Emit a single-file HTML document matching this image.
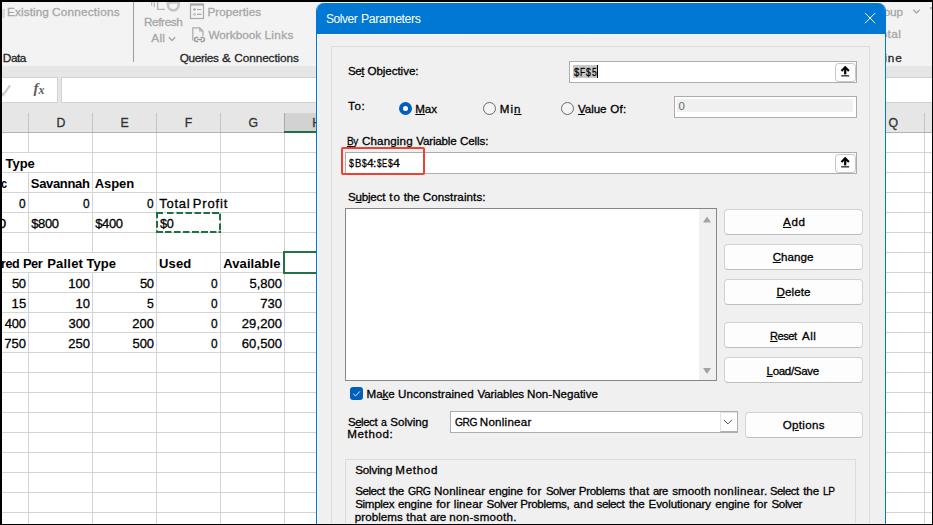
<!DOCTYPE html>
<html lang="en">
<head>
<meta charset="utf-8">
<title>Solver Parameters</title>
<style>
*{box-sizing:border-box;margin:0;padding:0}
html,body{width:933px;height:525px;overflow:hidden;background:#fff}
body{position:relative;font-family:"Liberation Sans",sans-serif;font-size:12px;color:#000}
.a{position:absolute}
.t{position:absolute;white-space:pre;line-height:1;-webkit-text-stroke:0.3px;transform-origin:0 0}
.w{display:inline-block;transform-origin:0 0;vertical-align:baseline}
u{text-decoration:underline;text-underline-offset:0.5px;text-decoration-thickness:1px}
.btn{position:absolute;background:#fdfdfd;border:1px solid #d2d2d2;border-bottom-color:#bebebe;border-radius:4px}
.inp{position:absolute;background:#fff;border:1px solid #abadb3}
.up{position:absolute;background:#fdfdfd;border:1px solid #c6c6c6;border-radius:3.5px}
.gl{position:absolute;background:#d4d4d4}
</style>
</head>
<body>
<div class="a" style="left:0;top:0;width:933px;height:66px;background:#f3f3f3"></div>
<div class="a" style="left:0;top:66px;width:933px;height:66px;background:#e6e6e6"></div>
<div class="a" style="left:0;top:77px;width:58px;height:26px;background:#fff;border:1px solid #d2d2d2"></div>
<div class="a" style="left:61px;top:77px;width:880px;height:26px;background:#fff;border:1px solid #d2d2d2"></div>
<div class="a" style="left:0;top:132px;width:933px;height:393px;background:#fff"></div>
<div class="a" style="left:285px;top:113px;width:40px;height:18px;background:#d2d2d2"></div>
<div class="a" style="left:28px;top:113px;width:1px;height:19px;background:#c4c4c4"></div>
<div class="a" style="left:92px;top:113px;width:1px;height:19px;background:#c4c4c4"></div>
<div class="a" style="left:156px;top:113px;width:1px;height:19px;background:#c4c4c4"></div>
<div class="a" style="left:220px;top:113px;width:1px;height:19px;background:#c4c4c4"></div>
<div class="a" style="left:284px;top:113px;width:1px;height:19px;background:#c4c4c4"></div>
<div class="a" style="left:348px;top:113px;width:1px;height:19px;background:#c4c4c4"></div>
<div class="a" style="left:412px;top:113px;width:1px;height:19px;background:#c4c4c4"></div>
<div class="a" style="left:476px;top:113px;width:1px;height:19px;background:#c4c4c4"></div>
<div class="a" style="left:540px;top:113px;width:1px;height:19px;background:#c4c4c4"></div>
<div class="a" style="left:604px;top:113px;width:1px;height:19px;background:#c4c4c4"></div>
<div class="a" style="left:668px;top:113px;width:1px;height:19px;background:#c4c4c4"></div>
<div class="a" style="left:732px;top:113px;width:1px;height:19px;background:#c4c4c4"></div>
<div class="a" style="left:796px;top:113px;width:1px;height:19px;background:#c4c4c4"></div>
<div class="a" style="left:860px;top:113px;width:1px;height:19px;background:#c4c4c4"></div>
<div class="a" style="left:924px;top:113px;width:1px;height:19px;background:#c4c4c4"></div>
<div class="gl" style="left:0;top:132px;width:933px;height:1px"></div>
<div class="gl" style="left:0;top:152px;width:933px;height:1px"></div>
<div class="gl" style="left:0;top:172px;width:933px;height:1px"></div>
<div class="gl" style="left:0;top:192px;width:933px;height:1px"></div>
<div class="gl" style="left:0;top:212px;width:933px;height:1px"></div>
<div class="gl" style="left:0;top:232px;width:933px;height:1px"></div>
<div class="gl" style="left:0;top:252px;width:933px;height:1px"></div>
<div class="gl" style="left:0;top:272px;width:933px;height:1px"></div>
<div class="gl" style="left:0;top:292px;width:933px;height:1px"></div>
<div class="gl" style="left:0;top:312px;width:933px;height:1px"></div>
<div class="gl" style="left:0;top:332px;width:933px;height:1px"></div>
<div class="gl" style="left:0;top:352px;width:933px;height:1px"></div>
<div class="gl" style="left:0;top:372px;width:933px;height:1px"></div>
<div class="gl" style="left:0;top:392px;width:933px;height:1px"></div>
<div class="gl" style="left:0;top:412px;width:933px;height:1px"></div>
<div class="gl" style="left:0;top:432px;width:933px;height:1px"></div>
<div class="gl" style="left:0;top:452px;width:933px;height:1px"></div>
<div class="gl" style="left:0;top:472px;width:933px;height:1px"></div>
<div class="gl" style="left:0;top:492px;width:933px;height:1px"></div>
<div class="gl" style="left:0;top:512px;width:933px;height:1px"></div>
<div class="gl" style="left:28px;top:132px;width:1px;height:393px"></div>
<div class="gl" style="left:92px;top:132px;width:1px;height:393px"></div>
<div class="gl" style="left:156px;top:132px;width:1px;height:393px"></div>
<div class="gl" style="left:220px;top:132px;width:1px;height:393px"></div>
<div class="gl" style="left:284px;top:132px;width:1px;height:393px"></div>
<div class="gl" style="left:348px;top:132px;width:1px;height:393px"></div>
<div class="gl" style="left:412px;top:132px;width:1px;height:393px"></div>
<div class="gl" style="left:476px;top:132px;width:1px;height:393px"></div>
<div class="gl" style="left:540px;top:132px;width:1px;height:393px"></div>
<div class="gl" style="left:604px;top:132px;width:1px;height:393px"></div>
<div class="gl" style="left:668px;top:132px;width:1px;height:393px"></div>
<div class="gl" style="left:732px;top:132px;width:1px;height:393px"></div>
<div class="gl" style="left:796px;top:132px;width:1px;height:393px"></div>
<div class="gl" style="left:860px;top:132px;width:1px;height:393px"></div>
<div class="gl" style="left:924px;top:132px;width:1px;height:393px"></div>
<div class="a" style="left:0;top:132px;width:933px;height:1px;background:#b2b2b2"></div>
<div class="a" style="left:284px;top:113px;width:1px;height:19px;background:#a8a8a8"></div>
<div class="a" style="left:284px;top:131px;width:40px;height:2px;background:#1e7145"></div>
<div class="a" style="left:2px;top:153px;width:60px;height:19px;background:#fff"></div>
<div class="a" style="left:2px;top:253px;width:120px;height:19px;background:#fff"></div>
<div class="a" style="left:157px;top:193px;width:75px;height:19px;background:#fff"></div>
<div class="a" style="left:133px;top:2px;width:1px;height:60px;background:#9c9c9c"></div>
<span class="t" style="left:7.08px;top:6.71px;font-size:11.8px;color:#a6a6a6"><span class="w" style="letter-spacing:0.074px;width:44.87px">Existing </span><span class="w" style="letter-spacing:0.207px">Connections</span></span>
<span class="t" style="left:2.83px;top:53.01px;letter-spacing:-0.443px;font-size:11.8px;color:#262626">Data</span>
<span class="t" style="left:143.98px;top:16.91px;letter-spacing:-0.405px;font-size:11.8px;color:#a6a6a6">Refresh</span>
<span class="t" style="left:151.20px;top:33.41px;letter-spacing:0.332px;font-size:11.8px;color:#a6a6a6">All</span>
<span class="t" style="left:207.48px;top:6.91px;letter-spacing:-0.015px;font-size:11.8px;color:#a6a6a6">Properties</span>
<span class="t" style="left:208.40px;top:29.71px;font-size:11.8px;color:#a6a6a6"><span class="w" style="letter-spacing:-0.013px;width:56.08px">Workbook </span><span class="w" style="letter-spacing:0.336px">Links</span></span>
<span class="t" style="left:179.75px;top:52.81px;font-size:11.8px;color:#262626"><span class="w" style="letter-spacing:-0.349px;width:42.55px">Queries </span><span class="w" style="transform:scaleX(1.0983);width:12.05px">&amp; </span><span class="w" style="letter-spacing:-0.098px">Connections</span></span>
<span class="t" style="left:883.63px;top:6.71px;letter-spacing:-0.170px;font-size:11.8px;color:#a6a6a6">oup</span>
<span class="t" style="left:880.63px;top:29.21px;letter-spacing:0.374px;font-size:11.8px;color:#a6a6a6">otal</span>
<span class="t" style="left:884.26px;top:52.61px;letter-spacing:0.859px;font-size:11.8px;color:#262626">ine</span>
<svg class="a" style="left:0;top:0" width="933" height="70" viewBox="0 0 933 70" fill="none" stroke="#a9a9a9" stroke-width="1">
<path d="M168.800 37.300 l3.200 3.200 l3.200 -3.200" stroke="#a4a4a4" stroke-width="1.300"/>
<path d="M913.300 9.800 l3.200 3.200 l3.200 -3.200" stroke="#a4a4a4" stroke-width="1.300"/>
<path d="M931 7 v2.200" stroke="#ababab" stroke-width="1.600"/>
<rect x="190.500" y="4.500" width="13" height="14" stroke="#a9a9a9" stroke-width="1.200"/>
<rect x="190" y="3.400" width="14" height="2.200" fill="#a9a9a9" stroke="none"/>
<circle cx="194.500" cy="9.500" r="1.300" fill="#a9a9a9" stroke="none"/><circle cx="194.500" cy="14.400" r="1" stroke="#a9a9a9" stroke-width="0.900"/>
<path d="M197 9.500 h4.500 M197 14.400 h4.500" stroke="#a9a9a9" stroke-width="1.200"/>
<path d="M192.800 40.600 V27.800 H199.800 L203 31 V36 M199.800 27.800 V31 H203" stroke="#ababab" stroke-width="1.200"/>
<path d="M198.200 37.500 h-1.700 a2 2 0 0 0 0 4 h1.700 M200.600 37.500 h1.900 a2 2 0 0 1 0 4 h-1.900 M197.300 39.500 h4.600" stroke="#9c9c9c" stroke-width="1.400"/>
<path d="M151.600 2 v3.500 M154.300 2 v5" stroke="#bcbcbc" stroke-width="1.200"/>
<path d="M157.600 2 v7.400 h7.400" stroke="#b8b8b8" stroke-width="1.300"/>
<path d="M168 2 V5 a5.300 5.300 0 0 0 10.600 0 V2" stroke="#c2c2c2" stroke-width="2.600"/>
<rect x="166.600" y="2" width="13.400" height="1.600" fill="#c2c2c2" stroke="none"/>
<rect x="2" y="9" width="3" height="9" fill="#dcd8dc" stroke="none"/>
</svg>
<svg class="a" style="left:0;top:78px" width="60" height="25" viewBox="0 0 60 25" fill="none"><path d="M0.500 13.500 L3.200 17 L10 7.300" stroke="#cbcbcb" stroke-width="2.100"/></svg>
<span class="t" style="left:33.5px;top:80.8px;font-family:'Liberation Serif',serif;font-style:italic;font-weight:bold;font-size:15px;color:#5e5e5e;-webkit-text-stroke:0">f<span style="font-size:12px;position:relative;top:1px">x</span></span>
<span class="t" style="left:56.40px;top:116.59px;font-size:12.3px;color:#333;width:8px;text-align:center">D</span>
<span class="t" style="left:120.40px;top:116.59px;font-size:12.3px;color:#333;width:8px;text-align:center">E</span>
<span class="t" style="left:184.40px;top:116.59px;font-size:12.3px;color:#333;width:8px;text-align:center">F</span>
<span class="t" style="left:248.40px;top:116.59px;font-size:12.3px;color:#333;width:8px;text-align:center">G</span>
<span class="t" style="left:312.30px;top:116.59px;font-size:12.3px;color:#333">H</span>
<span class="t" style="left:888.50px;top:116.59px;font-size:12.3px;color:#333">Q</span>
<span class="t" style="left:5.50px;top:157.00px;letter-spacing:-0.018px;font-size:13px;font-weight:bold;-webkit-text-stroke:0">Type</span>
<span class="t" style="left:0.66px;top:177.00px;transform:scaleX(0.8462);font-size:13px;font-weight:bold;-webkit-text-stroke:0">c</span>
<span class="t" style="left:30.80px;top:177.00px;letter-spacing:-0.333px;font-size:13px;font-weight:bold;-webkit-text-stroke:0">Savannah</span>
<span class="t" style="left:94.80px;top:177.00px;letter-spacing:-0.100px;font-size:13px;font-weight:bold;-webkit-text-stroke:0">Aspen</span>
<span class="t" style="left:19.20px;top:197.00px;transform:scaleX(0.9123);font-size:13px">0</span>
<span class="t" style="left:83.20px;top:197.00px;transform:scaleX(0.9123);font-size:13px">0</span>
<span class="t" style="left:147.20px;top:197.00px;transform:scaleX(0.9123);font-size:13px">0</span>
<span class="t" style="left:159.30px;top:197.00px;font-size:13px"><span class="w" style="letter-spacing:0.713px;width:33.44px">Total </span><span class="w" style="letter-spacing:0.876px">Profit</span></span>
<span class="t" style="left:-1.96px;top:217.00px;transform:scaleX(1.1385);font-size:13px">0</span>
<span class="t" style="left:31.25px;top:217.00px;letter-spacing:-0.365px;font-size:13px">$800</span>
<span class="t" style="left:95.25px;top:217.00px;letter-spacing:-0.365px;font-size:13px">$400</span>
<span class="t" style="left:159.80px;top:217.00px;letter-spacing:-0.450px;transform:scaleX(0.9791);font-size:13px">$0</span>
<span class="t" style="left:1.02px;top:257.00px;font-size:13px;font-weight:bold;-webkit-text-stroke:0"><span class="w" style="letter-spacing:-0.450px;transform:scaleX(0.9612);width:21.88px">red </span><span class="w" style="letter-spacing:-0.450px;transform:scaleX(0.9862);width:24.29px">Per </span><span class="w" style="letter-spacing:0.218px;width:39.41px">Pallet </span><span class="w" style="letter-spacing:-0.018px">Type</span></span>
<span class="t" style="left:158.89px;top:257.00px;letter-spacing:0.217px;font-size:13px;font-weight:bold;-webkit-text-stroke:0">Used</span>
<span class="t" style="left:223.30px;top:257.00px;letter-spacing:0.078px;font-size:13px;font-weight:bold;-webkit-text-stroke:0">Available</span>
<span class="t" style="left:11.98px;top:277.00px;letter-spacing:-0.370px;font-size:13px">50</span>
<span class="t" style="left:68.15px;top:277.00px;letter-spacing:0.118px;font-size:13px">100</span>
<span class="t" style="left:139.98px;top:277.00px;letter-spacing:-0.370px;font-size:13px">50</span>
<span class="t" style="left:211.45px;top:277.00px;transform:scaleX(0.9123);font-size:13px">0</span>
<span class="t" style="left:249.42px;top:277.00px;letter-spacing:0.030px;font-size:13px">5,800</span>
<span class="t" style="left:11.58px;top:297.00px;letter-spacing:0.239px;font-size:13px">15</span>
<span class="t" style="left:75.58px;top:297.00px;letter-spacing:0.036px;font-size:13px">10</span>
<span class="t" style="left:147.44px;top:297.00px;transform:scaleX(0.9417);font-size:13px">5</span>
<span class="t" style="left:211.45px;top:297.00px;transform:scaleX(0.9123);font-size:13px">0</span>
<span class="t" style="left:260.35px;top:297.00px;letter-spacing:0.017px;font-size:13px">730</span>
<span class="t" style="left:4.76px;top:317.00px;letter-spacing:-0.187px;font-size:13px">400</span>
<span class="t" style="left:68.55px;top:317.00px;letter-spacing:-0.085px;font-size:13px">300</span>
<span class="t" style="left:132.35px;top:317.00px;letter-spacing:0.017px;font-size:13px">200</span>
<span class="t" style="left:211.45px;top:317.00px;transform:scaleX(0.9123);font-size:13px">0</span>
<span class="t" style="left:241.79px;top:317.00px;letter-spacing:0.104px;font-size:13px">29,200</span>
<span class="t" style="left:4.35px;top:337.00px;letter-spacing:0.017px;font-size:13px">750</span>
<span class="t" style="left:68.35px;top:337.00px;letter-spacing:0.017px;font-size:13px">250</span>
<span class="t" style="left:132.55px;top:337.00px;letter-spacing:-0.085px;font-size:13px">500</span>
<span class="t" style="left:211.45px;top:337.00px;transform:scaleX(0.9123);font-size:13px">0</span>
<span class="t" style="left:241.79px;top:337.00px;letter-spacing:0.104px;font-size:13px">60,500</span>
<svg class="a" style="left:0;top:0" width="240" height="240" viewBox="0 0 240 240" fill="#1e7145"><rect x="156" y="212" width="7" height="2"/><rect x="167" y="212" width="6.5" height="2"/><rect x="176.5" y="212" width="6.5" height="2"/><rect x="185.5" y="212" width="6.5" height="2"/><rect x="194.5" y="212" width="6.5" height="2"/><rect x="203.5" y="212" width="6.5" height="2"/><rect x="212" y="212" width="7" height="2"/><rect x="156" y="231" width="7" height="2"/><rect x="165" y="231" width="6.5" height="2"/><rect x="174" y="231" width="6.5" height="2"/><rect x="183" y="231" width="6.5" height="2"/><rect x="192" y="231" width="7" height="2"/><rect x="201" y="231" width="7" height="2"/><rect x="210" y="231" width="6.5" height="2"/><rect x="218.5" y="231" width="2.5" height="2"/><rect x="156" y="212" width="2" height="6.3"/><rect x="156" y="220.9" width="2" height="6.8"/><rect x="156" y="230.3" width="2" height="2.7"/><rect x="219" y="213.6" width="2" height="6.8"/><rect x="219" y="223.4" width="2" height="6.5"/><rect x="219" y="230.7" width="2" height="2.3"/></svg>
<div class="a" style="left:283px;top:251px;width:60px;height:23px;border:2px solid #217346;background:#fff"></div>
<div class="a" style="left:316px;top:3px;width:570px;height:530px;background:#f0f0f0;border-left:1px solid #0078d4;border-right:1px solid #0078d4;border-radius:8px 8px 0 0;overflow:hidden"><div class="a" style="left:-1px;top:0;width:570px;height:31px;background:#0078d4"></div></div>
<div class="a" style="left:317px;top:34px;width:568px;height:1px;background:linear-gradient(to right,#faf8f5,#f6f4f2 50%,#f0f0f0)"></div><div class="a" style="left:317px;top:34px;width:1px;height:491px;background:#faf8f5"></div>
<span class="t" style="left:325.88px;top:12.59px;font-size:12.3px;color:#fff;-webkit-text-stroke:0"><span class="w" style="letter-spacing:-0.450px;transform:scaleX(0.9714);width:35.16px">Solver </span><span class="w" style="letter-spacing:-0.414px">Parameters</span></span>
<svg class="a" style="left:860px;top:8px" width="20" height="20" viewBox="0 0 20 20"><path d="M5 5 L15.200 15.200 M15.200 5 L5 15.200" stroke="#fff" stroke-width="1" fill="none"/></svg>
<div class="a" style="left:331px;top:46px;width:539px;height:500px;border:1px solid #dcdcdc"></div>
<span class="t" style="left:347.89px;top:65.18px;font-size:11.6px"><span class="w" style="letter-spacing:-0.450px;width:19.57px">Se<u>t</u> </span><span class="w" style="letter-spacing:-0.054px">Objective:</span></span>
<div class="inp" style="left:569px;top:61px;width:288px;height:22px"></div>
<div class="a" style="left:573px;top:65px;width:24px;height:13px;background:#c8c8c8"></div>
<span class="t" style="left:573.70px;top:67.27px;font-size:11.5px"><span class="w" style="transform:scaleX(0.8109);width:5.94px">$</span><span class="w" style="transform:scaleX(0.7304);width:6.06px">F</span><span class="w" style="transform:scaleX(0.7473);width:6.03px">$</span><span class="w" style="transform:scaleX(0.7540)">5</span></span>
<div class="a" style="left:597px;top:65px;width:1px;height:13px;background:#000"></div>
<div class="up" style="left:835px;top:62.5px;width:21px;height:19px"></div>
<svg class="a" style="left:835px;top:62.5px" width="21" height="20" viewBox="0 0 21 20" fill="none" stroke="#000"><path d="M6.500 8 L10.200 4.300 L13.900 8" stroke-width="2.200"/><path d="M10.200 5 V11.400" stroke-width="2.200"/><rect x="6.200" y="12.300" width="8" height="1.100" fill="#000" stroke="none"/></svg>
<span class="t" style="left:348.07px;top:100.18px;letter-spacing:0.627px;font-size:11.6px">To:</span>
<div class="a" style="left:399px;top:102px;width:13px;height:13px;border-radius:50%;background:#005fb8"></div><div class="a" style="left:403px;top:106px;width:5px;height:5px;border-radius:50%;background:#fff"></div>
<span class="t" style="left:415.34px;top:103.18px;letter-spacing:-0.129px;font-size:11.6px"><u>M</u>ax</span>
<div class="a" style="left:483px;top:102px;width:13px;height:13px;border-radius:50%;background:#f4f4f4;border:1px solid #6a6a6a"></div>
<span class="t" style="left:499.84px;top:103.18px;letter-spacing:1.000px;font-size:11.6px">Mi<u>n</u></span>
<div class="a" style="left:561px;top:102px;width:13px;height:13px;border-radius:50%;background:#f4f4f4;border:1px solid #6a6a6a"></div>
<span class="t" style="left:578.10px;top:103.43px;font-size:11.6px"><span class="w" style="letter-spacing:-0.109px;width:32.06px"><u>V</u>alue </span><span class="w" style="letter-spacing:0.312px">Of:</span></span>
<div class="inp" style="left:674px;top:96px;width:183px;height:22px"></div>
<div class="a" style="left:677px;top:99px;width:176px;height:13px;background:#f0f0f0"></div>
<span class="t" style="left:678.50px;top:101.27px;font-size:11.5px;color:#6d6d6d;-webkit-text-stroke:0">0</span>
<span class="t" style="left:347.47px;top:135.18px;font-size:11.6px"><span class="w" style="letter-spacing:-0.450px;transform:scaleX(0.8620);width:14.49px"><u>B</u>y </span><span class="w" style="letter-spacing:0.148px;width:54.29px">Changing </span><span class="w" style="letter-spacing:-0.176px;width:43.71px">Variable </span><span class="w" style="letter-spacing:-0.083px">Cells:</span></span>
<div class="inp" style="left:345px;top:152px;width:512px;height:22px"></div>
<span class="t" style="left:349.40px;top:157.87px;font-size:11.5px"><span class="w" style="transform:scaleX(0.7632);width:5.26px">$</span><span class="w" style="transform:scaleX(0.8268);width:6.94px">B</span><span class="w" style="transform:scaleX(0.7314);width:5.01px">$</span><span class="w" style="transform:scaleX(1.0456);width:6.76px">4</span><span class="w" style="transform:scaleX(1.0335);width:3.33px">:</span><span class="w" style="transform:scaleX(0.7155);width:5.20px">$</span><span class="w" style="transform:scaleX(0.6678);width:5.70px">E</span><span class="w" style="transform:scaleX(0.7473);width:5.11px">$</span><span class="w" style="transform:scaleX(1.0793)">4</span></span>
<div class="up" style="left:835px;top:153.5px;width:21px;height:19px"></div>
<svg class="a" style="left:835px;top:153.5px" width="21" height="20" viewBox="0 0 21 20" fill="none" stroke="#000"><path d="M6.500 8 L10.200 4.300 L13.900 8" stroke-width="2.200"/><path d="M10.200 5 V11.400" stroke-width="2.200"/><rect x="6.200" y="12.300" width="8" height="1.100" fill="#000" stroke="none"/></svg>
<div class="a" style="left:341px;top:147px;width:84px;height:28px;border:2px solid #ea4335;border-radius:2px"></div>
<span class="t" style="left:347.89px;top:191.18px;font-size:11.6px"><span class="w" style="letter-spacing:-0.186px;width:41.36px">S<u>u</u>bject </span><span class="w" style="letter-spacing:1.000px;width:14.50px">to </span><span class="w" style="letter-spacing:-0.078px;width:18.96px">the </span><span class="w" style="letter-spacing:0.086px">Constraints:</span></span>
<div class="a" style="left:345px;top:208px;width:372px;height:173px;background:#fff;border:1px solid #828790"></div>
<div class="a" style="left:699px;top:209px;width:17px;height:171px;background:#f0f0f0"></div>
<svg class="a" style="left:699px;top:209px" width="18" height="171" viewBox="0 0 18 171"><path d="M4 13.500 L8 7.500 L12 13.500 Z M4 159 L8 165 L12 159 Z" fill="#a3a3a3"/></svg>
<div class="btn" style="left:724px;top:209px;width:139px;height:26px"></div>
<span class="t" style="left:783.00px;top:216.43px;letter-spacing:0.631px;font-size:11.6px"><u>A</u>dd</span>
<div class="btn" style="left:724px;top:244px;width:139px;height:26px"></div>
<span class="t" style="left:772.71px;top:251.43px;letter-spacing:0.026px;font-size:11.6px"><u>C</u>hange</span>
<div class="btn" style="left:724px;top:279px;width:139px;height:26px"></div>
<span class="t" style="left:776.59px;top:286.43px;letter-spacing:0.069px;font-size:11.6px"><u>D</u>elete</span>
<div class="btn" style="left:724px;top:322px;width:139px;height:26px"></div>
<span class="t" style="left:770.39px;top:329.68px;font-size:11.6px"><span class="w" style="letter-spacing:-0.450px;transform:scaleX(0.9498);width:31.61px"><u>R</u>eset </span><span class="w" style="letter-spacing:0.437px">All</span></span>
<div class="btn" style="left:724px;top:357px;width:139px;height:26px"></div>
<span class="t" style="left:766.59px;top:364.68px;letter-spacing:-0.355px;font-size:11.6px"><u>L</u>oad/Save</span>
<div class="a" style="left:350px;top:387px;width:13px;height:13px;border-radius:3px;background:#005fb8"></div><svg class="a" style="left:350px;top:387px" width="13" height="13" viewBox="0 0 13 13"><path d="M3.400 7 L5.600 8.900 L9.900 4.400" stroke="#eaf2fb" stroke-width="1" fill="none"/></svg>
<span class="t" style="left:366.59px;top:388.18px;font-size:11.6px"><span class="w" style="letter-spacing:-0.080px;width:31.43px">Ma<u>k</u>e </span><span class="w" style="letter-spacing:0.069px;width:79.48px">Unconstrained </span><span class="w" style="letter-spacing:-0.111px;width:49.59px">Variables </span><span class="w">Non-Negative</span></span>
<span class="t" style="left:347.89px;top:415.68px;font-size:11.6px"><span class="w" style="letter-spacing:-0.450px;transform:scaleX(0.9859);width:33.38px">S<u>e</u>lect </span><span class="w" style="transform:scaleX(0.9087);width:9.12px">a </span><span class="w" style="letter-spacing:-0.047px">Solving</span></span>
<span class="t" style="left:347.34px;top:428.18px;letter-spacing:0.590px;font-size:11.6px">Method:</span>
<div class="inp" style="left:450px;top:411px;width:288px;height:22px"></div>
<div class="a" style="left:720px;top:412px;width:17px;height:20px;background:#fdfdfd;border:1px solid #e2e2e2;border-right:none;border-bottom-color:#b0b0b0"></div>
<svg class="a" style="left:720px;top:412px" width="18" height="20" viewBox="0 0 18 20"><path d="M3.900 7.900 L7.900 11.900 L11.900 7.900" stroke="#505050" stroke-width="1" fill="none"/></svg>
<span class="t" style="left:454.52px;top:416.43px;font-size:11.6px"><span class="w" style="letter-spacing:-0.450px;transform:scaleX(0.8813);width:25.32px">GRG </span><span class="w" style="letter-spacing:0.226px">Nonlinear</span></span>
<div class="btn" style="left:745px;top:412px;width:118px;height:26px"></div>
<span class="t" style="left:782.71px;top:419.18px;letter-spacing:0.322px;font-size:11.6px">O<u>p</u>tions</span>
<div class="a" style="left:345px;top:459px;width:511px;height:100px;border:1px solid #dcdcdc"></div>
<span class="t" style="left:355.14px;top:464.18px;font-size:11.6px"><span class="w" style="letter-spacing:-0.130px;width:40.21px">Solving </span><span class="w" style="letter-spacing:0.673px">Method</span></span>
<span class="t" style="left:355.14px;top:485.18px;font-size:11.6px"><span class="w" style="letter-spacing:-0.450px;width:33.61px">Select </span><span class="w" style="letter-spacing:-0.328px;width:19.51px">the </span><span class="w" style="letter-spacing:-0.450px;transform:scaleX(0.9020);width:25.83px">GRG </span><span class="w" style="letter-spacing:0.164px;width:54.79px">Nonlinear </span><span class="w" style="letter-spacing:-0.150px;width:38.11px">engine </span><span class="w" style="letter-spacing:0.385px;width:18.55px">for </span><span class="w" style="letter-spacing:-0.450px;transform:scaleX(0.9765);width:33.25px">Solver </span><span class="w" style="letter-spacing:-0.332px;width:50.61px">Problems </span><span class="w" style="letter-spacing:0.154px;width:24.00px">that </span><span class="w" style="letter-spacing:-0.450px;transform:scaleX(0.9645);width:18.92px">are </span><span class="w" style="letter-spacing:0.059px;width:41.46px">smooth </span><span class="w" style="letter-spacing:0.357px;width:56.62px">nonlinear. </span><span class="w" style="letter-spacing:-0.450px;transform:scaleX(0.9691);width:32.85px">Select </span><span class="w" style="letter-spacing:-0.078px;width:19.71px">the </span><span class="w" style="letter-spacing:-0.450px;transform:scaleX(0.8708)">LP</span></span>
<span class="t" style="left:355.14px;top:498.18px;font-size:11.6px"><span class="w" style="letter-spacing:-0.316px;width:42.75px">Simplex </span><span class="w" style="letter-spacing:-0.100px;width:38.36px">engine </span><span class="w" style="letter-spacing:0.135px;width:17.52px">for </span><span class="w" style="letter-spacing:0.082px;width:32.86px">linear </span><span class="w" style="letter-spacing:-0.392px;width:33.71px">Solver </span><span class="w" style="letter-spacing:-0.349px;width:53.09px">Problems, </span><span class="w" style="letter-spacing:0.180px;width:23.18px">and </span><span class="w" style="letter-spacing:-0.450px;width:32.48px">select </span><span class="w" style="letter-spacing:-0.253px;width:19.49px">the </span><span class="w" style="letter-spacing:-0.107px;width:66.79px">Evolutionary </span><span class="w" style="letter-spacing:-0.100px;width:38.36px">engine </span><span class="w" style="letter-spacing:0.135px;width:17.89px">for </span><span class="w" style="letter-spacing:-0.392px">Solver</span></span>
<span class="t" style="left:354.77px;top:510.88px;font-size:11.6px"><span class="w" style="letter-spacing:0.054px;width:51.48px">problems </span><span class="w" style="letter-spacing:0.204px;width:23.89px">that </span><span class="w" style="letter-spacing:-0.342px;width:19.14px">are </span><span class="w" style="letter-spacing:0.279px">non-smooth.</span></span>
<div class="a" style="left:0;top:0;width:933px;height:2px;background:#000"></div>
<div class="a" style="left:0;top:0;width:2px;height:525px;background:#000"></div>
<div class="a" style="left:0;top:524px;width:933px;height:1px;background:#000"></div>
<div class="a" style="left:932px;top:0;width:1px;height:525px;background:#000"></div>
</body>
</html>
